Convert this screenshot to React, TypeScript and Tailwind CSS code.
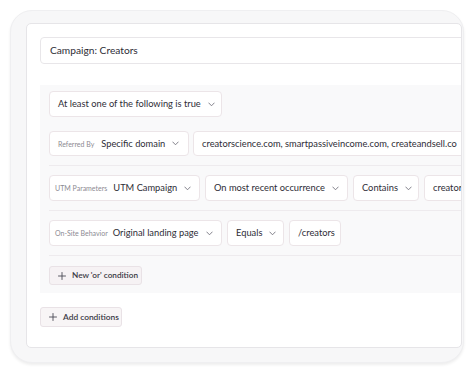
import React from "react";

// Segment rule editor — one card framed in a soft rounded shell.

const Chevron = () => (
  <svg width="7" height="5" viewBox="0 0 7 5" fill="none" className="shrink-0">
    <path d="M0.8 1l2.7 2.8L6.2 1" stroke="#6f6e78" strokeWidth="0.85" strokeLinecap="round" strokeLinejoin="round" />
  </svg>
);

const Plus = () => (
  <svg width="8" height="8" viewBox="0 0 8 8" fill="none" className="shrink-0">
    <path d="M4 0.5v7M0.5 4h7" stroke="#4a4a55" strokeWidth="0.9" strokeLinecap="round" />
  </svg>
);

type SelectProps = {
  label?: string;
  value: string;
  width: string;
  chevron?: boolean;
  labelGap?: string;
  pad?: string;
  height?: string;
};

function Select({
  label,
  value,
  width,
  chevron = true,
  labelGap = "gap-[6px]",
  pad = "pl-2",
  height = "h-[26px]",
}: SelectProps) {
  return (
    <div
      className={`${width} ${pad} ${height} shrink-0 flex items-center justify-between gap-[7px] pr-[10px] bg-white border border-[#ece5e8] rounded-[4px]`}
    >
      <div className={`flex items-baseline ${labelGap} whitespace-nowrap`}>
        {label && <span className="text-[7px] text-[#8c8a92]">{label}</span>}
        <span className="text-[9.3px] text-[#2e2d36]">{value}</span>
      </div>
      {chevron && <Chevron />}
    </div>
  );
}

function Row({ children }: { children: React.ReactNode }) {
  return <div className="flex gap-[5px] py-[9px] border-b border-[#eeebee]">{children}</div>;
}

export default function App() {
  return (
    <div className="w-[474px] h-[373px] bg-white pt-[10px] pl-[10px]" style={{ fontFamily: "Lato, 'Noto Sans', sans-serif" }}>
      <div className="w-[454px] h-[353px] bg-[#f7f7f8] rounded-[22px] border border-[#efeff1] shadow-[0_2px_3px_rgba(0,0,0,0.07)] pt-[12px] pl-[15px] pr-[1px]">
        <div className="h-[325px] bg-white border border-[#e6e5e8] rounded-[5px] overflow-hidden pt-[13px] pl-[13px]">
          <div className="w-[460px] h-[27px] flex items-center pl-[9px] border border-[#e8e6e9] rounded-[4px] text-[10.2px] text-[#2e2d36]">
            Campaign: Creators
          </div>

          <div className="w-[460px] mt-[21px] bg-[#f9f9fa] pt-[6px] pb-[8px] pl-[9px]">
            <Select value="At least one of the following is true" width="w-[173px]" />

            <div className="mt-[5px]">
              <Row>
                <Select label="Referred By" value="Specific domain" width="w-[140px]" labelGap="gap-[7px]" height="h-[25px]" />
                <div className="w-[300px] shrink-0 h-[25px] flex items-center pl-2 bg-white border border-[#ece5e8] rounded-[4px] whitespace-nowrap text-[9.3px] text-[#2e2d36] -ml-[1px]">
                  creatorscience.com, smartpassiveincome.com, createandsell.co
                </div>
              </Row>
              <Row>
                <Select label="UTM Parameters" value="UTM Campaign" width="w-[151px]" pad="pl-[5px]" />
                <Select value="On most recent occurrence" width="w-[143px]" />
                <Select value="Contains" width="w-[66px]" />
                <Select value="creator" width="w-[80px]" chevron={false} />
              </Row>
              <Row>
                <Select label="On-Site Behavior" value="Original landing page" width="w-[173px]" pad="pl-[5px]" labelGap="gap-[5px]" />
                <Select value="Equals" width="w-[57px]" />
                <Select value="/creators" width="w-[52px]" chevron={false} />
              </Row>
            </div>

            <button className="mt-[10px] h-[19px] w-[93px] flex items-center gap-[6px] pl-[8px] bg-[#f6f2f4] border border-[#e9e2e6] rounded-[3px] text-[8.2px] font-semibold text-[#3b3a46] whitespace-nowrap">
              <Plus />
              New 'or' condition
            </button>
          </div>

          <button className="mt-[14px] h-[20px] w-[82px] flex items-center gap-[6px] pl-[8px] bg-[#f8f5f6] border border-[#e9e2e6] rounded-[3px] text-[8.4px] font-semibold text-[#3b3a46] whitespace-nowrap">
            <Plus />
            Add conditions
          </button>
        </div>
      </div>
    </div>
  );
}
